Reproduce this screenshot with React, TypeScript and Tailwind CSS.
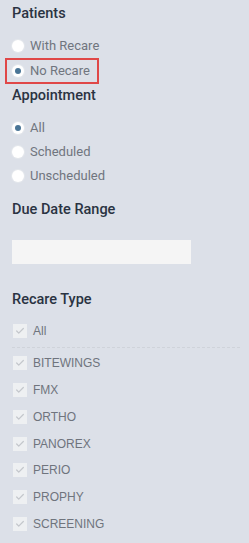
import { Check } from 'lucide-react'

const recareTypes = ['BITEWINGS', 'FMX', 'ORTHO', 'PANOREX', 'PERIO', 'PROPHY', 'SCREENING']

function Radio({ label, checked }: { label: string; checked?: boolean }) {
  return (
    <div className="flex items-center h-[24px]">
      <span className="w-[12px] h-[12px] rounded-full bg-white flex items-center justify-center shadow-[0_0_0_1px_#e4e7ec]">
        {checked && <span className="w-[6px] h-[6px] rounded-full bg-[#4a7596]"></span>}
      </span>
      <span className="ml-[6px] text-[13px] text-[#70757e]">{label}</span>
    </div>
  )
}

function CheckItem({ label }: { label: string }) {
  return (
    <div className="flex items-center h-[26.8px]">
      <span className="ml-[1px] w-[14px] h-[14px] bg-[#eef0f2] flex items-center justify-center">
        <Check className="w-[10px] h-[10px] text-[#c4c7cc]" strokeWidth={3} />
      </span>
      <span className="ml-[6px] text-[12px] text-[#6f747d] font-['Liberation_Sans',Arial,sans-serif]">{label}</span>
    </div>
  )
}

function App() {
  return (
    <div className="w-[249px] h-[543px] bg-[#dce0e8] px-[12px] pt-[4px] font-['Roboto',sans-serif] overflow-hidden">
      {/* Patients */}
      <h2 className="text-[14.5px] font-medium text-[#2a3342] h-[20px] leading-[20px]">Patients</h2>
      <div className="mt-[10px]">
        <Radio label="With Recare" />
        <div className="-mx-[7px] border-2 border-[#e04848] px-[5px] w-[94px] h-[26px] flex items-center">
          <Radio label="No Recare" checked />
        </div>
      </div>

      {/* Appointment */}
      <h2 className="text-[14.5px] font-medium text-[#2a3342] h-[20px] leading-[20px] mt-[2px]">Appointment</h2>
      <div className="mt-[10px]">
        <Radio label="All" checked />
        <Radio label="Scheduled" />
        <Radio label="Unscheduled" />
      </div>

      {/* Due Date Range */}
      <h2 className="text-[14.5px] font-medium text-[#2a3342] h-[20px] leading-[20px] mt-[12px]">Due Date Range</h2>
      <div className="mt-[20px] w-[179px] h-[24px] bg-[#f5f5f5]"></div>

      {/* Recare Type */}
      <h2 className="text-[14.5px] font-medium text-[#2a3342] h-[20px] leading-[20px] mt-[26px]">Recare Type</h2>
      <div className="mt-[8px]">
        <CheckItem label="All" />
        <div className="border-t border-dashed border-[#cfd3da] w-[228px] my-[2px]"></div>
        {recareTypes.map(t => (
          <CheckItem key={t} label={t} />
        ))}
      </div>
    </div>
  )
}

export default App
